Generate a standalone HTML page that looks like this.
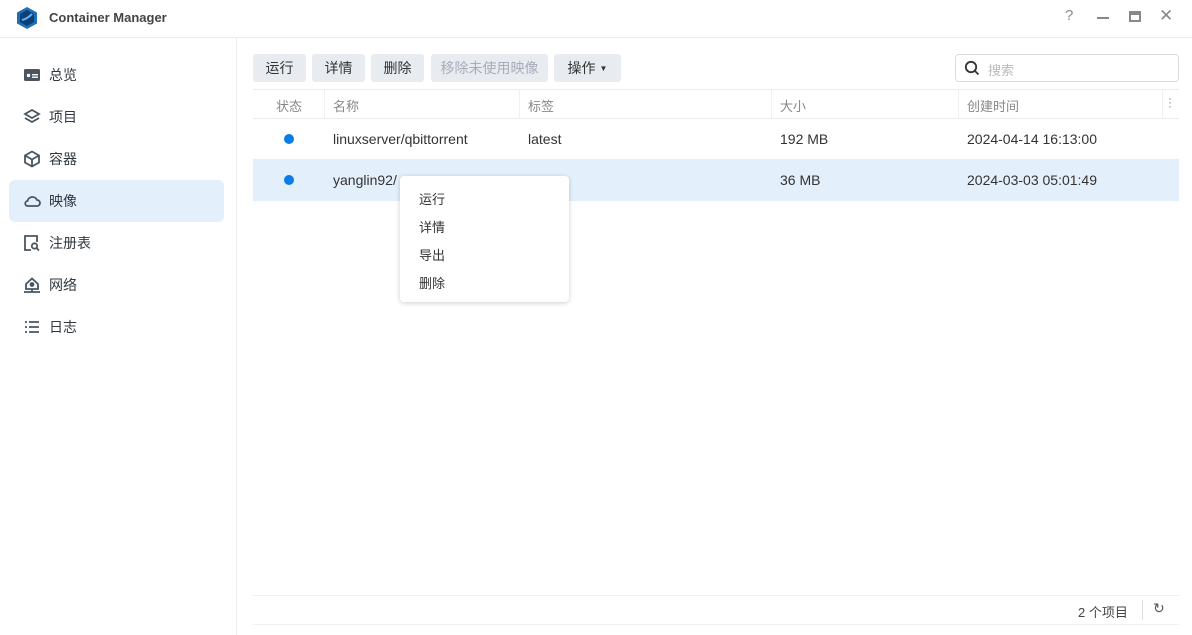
<!DOCTYPE html><html><head><meta charset="utf-8"><style>
*{box-sizing:border-box;margin:0;padding:0}
body{width:1192px;height:635px;background:#fff;font-family:"Liberation Sans","Noto Sans CJK SC",sans-serif;color:#333;position:relative;overflow:hidden;font-size:14px}
.abs{position:absolute}
.nav{position:absolute;left:9px;width:215px;height:42px;display:flex;align-items:center;padding-left:14px;font-size:14px;color:#303840;border-radius:6px}
.nav svg{width:18px;height:18px;margin-right:8px}
.btn{position:absolute;top:54px;height:28px;background:#e8ecf0;border-radius:3px;font-size:14px;color:#333;display:flex;align-items:center;justify-content:center}
.th{position:absolute;top:96px;font-size:13px;color:#888}
.td{position:absolute;font-size:14px;color:#333}
.dot{position:absolute;width:10px;height:10px;border-radius:50%;background:#0a7ce8;left:284px}
.mi{position:absolute;left:419px;font-size:13px;color:#333}
</style></head><body>
<svg class="abs" style="left:16px;top:6px" width="22" height="24" viewBox="0 0 22 24"><polygon points="11,1 21,6.5 21,17.5 11,23 1,17.5 1,6.5" fill="#1d6fb8"/><polygon points="11,4 18,8 18,16 11,20 4,16 4,8" fill="#0e3f73"/><path d="M6 14 Q11 13 16 8" stroke="#5fb0ff" stroke-width="2" fill="none"/></svg>
<div class="abs" style="left:49px;top:10px;font-size:13px;font-weight:bold;color:#444">Container Manager</div>
<div class="abs" style="left:1065px;top:7px;font-size:15px;color:#888">?</div>
<div class="abs" style="left:1097px;top:17px;width:12px;height:2px;background:#888"></div>
<div class="abs" style="left:1129px;top:11px;width:12px;height:11px;border:2px solid #888;border-top-width:4px"></div>
<div class="abs" style="left:1159px;top:6px;font-size:17px;color:#888">✕</div>
<div class="abs" style="left:0;top:37px;width:1192px;height:1px;background:#e8ecf0"></div>
<div class="abs" style="left:236px;top:38px;width:1px;height:597px;background:#e8ecf0"></div>

<div class="nav" style="top:54px"><svg viewBox="0 0 18 18"><rect x="1" y="3" width="16" height="12" rx="1.5" fill="#4a5560"/><circle cx="5.5" cy="9.5" r="1.7" fill="#fff"/><rect x="9" y="8" width="6" height="1.4" fill="#fff"/><rect x="9" y="10.5" width="6" height="1.4" fill="#fff"/></svg>总览</div>
<div class="nav" style="top:96px"><svg viewBox="0 0 18 18" fill="none" stroke="#4a5560" stroke-width="1.8"><path d="M9 2L16 6 9 10 2 6Z"/><path d="M2 10l7 4 7-4"/></svg>项目</div>
<div class="nav" style="top:138px"><svg viewBox="0 0 18 18" fill="none" stroke="#4a5560" stroke-width="1.8"><path d="M9 1.5L16 5.5V12.5L9 16.5 2 12.5V5.5Z"/><path d="M2 5.5L9 9.5 16 5.5M9 9.5V16.5"/></svg>容器</div>
<div class="nav" style="top:180px;background:#e3effb"><svg viewBox="0 0 18 18" fill="none" stroke="#4a5560" stroke-width="1.8"><path d="M5 14h9a3 3 0 0 0 0-6 5 5 0 0 0-9.5 1A2.5 2.5 0 0 0 5 14z"/></svg>映像</div>
<div class="nav" style="top:222px"><svg viewBox="0 0 18 18" fill="none" stroke="#4a5560" stroke-width="1.8"><path d="M8 16H2V2h12v6"/><circle cx="11.5" cy="12" r="2.7"/><path d="M13.5 14l2.5 2.5"/></svg>注册表</div>
<div class="nav" style="top:264px"><svg viewBox="0 0 18 18" fill="none" stroke="#4a5560" stroke-width="1.8"><path d="M3 8L9 2.5 15 8V13H3Z"/><path d="M1 16h16M9 13v3"/><circle cx="9" cy="8.5" r="1.5" fill="#4a5560"/></svg>网络</div>
<div class="nav" style="top:306px"><svg viewBox="0 0 18 18" stroke="#4a5560" stroke-width="1.8"><path d="M2 4h2M2 9h2M2 14h2M6 4h10M6 9h10M6 14h10"/></svg>日志</div>

<div class="btn" style="left:253px;width:53px">运行</div>
<div class="btn" style="left:312px;width:53px">详情</div>
<div class="btn" style="left:371px;width:53px">删除</div>
<div class="btn" style="left:431px;width:117px;color:#aab">移除未使用映像</div>
<div class="btn" style="left:554px;width:67px">操作 <span style="font-size:8px;margin-left:4px">▼</span></div>
<div class="abs" style="left:955px;top:54px;width:224px;height:28px;border:1px solid #d8dde2;border-radius:4px"></div>
<svg class="abs" style="left:964px;top:60px" width="16" height="16" viewBox="0 0 16 16" fill="none" stroke="#333" stroke-width="1.8"><circle cx="7" cy="7" r="5.2"/><path d="M11 11l3.5 3.5"/></svg>
<div class="abs" style="left:988px;top:60px;font-size:13px;color:#bbb">搜索</div>

<div class="abs" style="left:253px;top:89px;width:926px;height:1px;background:#e8ecf0"></div>
<div class="abs" style="left:253px;top:118px;width:926px;height:1px;background:#e8ecf0"></div>
<div class="abs" style="left:324px;top:90px;width:1px;height:28px;background:#eef0f2"></div>
<div class="abs" style="left:519px;top:90px;width:1px;height:28px;background:#eef0f2"></div>
<div class="abs" style="left:771px;top:90px;width:1px;height:28px;background:#eef0f2"></div>
<div class="abs" style="left:958px;top:90px;width:1px;height:28px;background:#eef0f2"></div>
<div class="abs" style="left:1162px;top:90px;width:1px;height:28px;background:#eef0f2"></div>
<div class="th" style="left:276px">状态</div><div class="th" style="left:333px">名称</div><div class="th" style="left:528px">标签</div><div class="th" style="left:780px">大小</div><div class="th" style="left:967px">创建时间</div>
<div class="abs" style="left:1168px;top:96px;font-size:12px;color:#888;line-height:4px">·<br>·<br>·</div>

<div class="dot" style="top:134px"></div>
<div class="td" style="left:333px;top:131px">linuxserver/qbittorrent</div>
<div class="td" style="left:528px;top:131px">latest</div>
<div class="td" style="left:780px;top:131px">192 MB</div>
<div class="td" style="left:967px;top:131px">2024-04-14 16:13:00</div>
<div class="abs" style="left:253px;top:159px;width:926px;height:42px;background:#e3effb"></div>
<div class="dot" style="top:175px"></div>
<div class="td" style="left:333px;top:172px">yanglin92/</div>
<div class="td" style="left:780px;top:172px">36 MB</div>
<div class="td" style="left:967px;top:172px">2024-03-03 05:01:49</div>

<div class="abs" style="left:400px;top:176px;width:169px;height:126px;background:#fff;border-radius:4px;box-shadow:0 1px 5px rgba(0,0,0,.2)"></div>
<div class="mi" style="top:189px">运行</div><div class="mi" style="top:217px">详情</div><div class="mi" style="top:245px">导出</div><div class="mi" style="top:273px">删除</div>

<div class="abs" style="left:253px;top:595px;width:926px;height:1px;background:#eef0f2"></div>
<div class="abs" style="left:253px;top:624px;width:926px;height:1px;background:#eef0f2"></div>
<div class="abs" style="left:1078px;top:602px;font-size:13px;color:#444">2 个项目</div>
<div class="abs" style="left:1142px;top:600px;width:1px;height:20px;background:#e0e0e0"></div>
<div class="abs" style="left:1153px;top:600px;font-size:14px;color:#555">↻</div>
</body></html>
